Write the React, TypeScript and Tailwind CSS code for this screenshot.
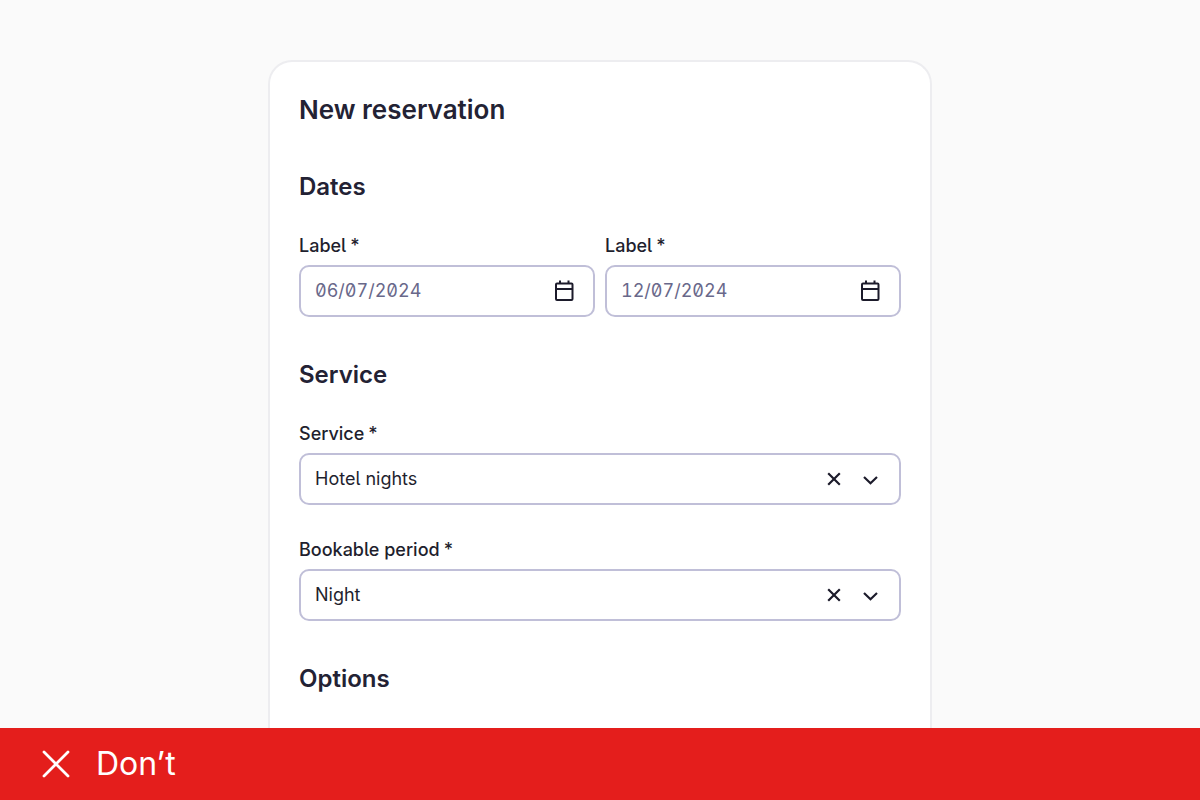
import { useId, useState } from "react";

function Label({ htmlFor, children }: { htmlFor: string; children: string }) {
  return (
    <label
      htmlFor={htmlFor}
      className="flex gap-1 text-lg leading-6 font-medium text-[#1f1f2e]"
    >
      {children}
      <span aria-hidden="true">*</span>
    </label>
  );
}

function DateField({ label, initial }: { label: string; initial: string }) {
  const id = useId();
  const [value, setValue] = useState(initial);

  return (
    <div className="min-w-0 flex-1">
      <Label htmlFor={id}>{label}</Label>
      <div className="mt-[7px] flex h-[52px] items-center rounded-[10px] border-2 border-[#c0bfd8] bg-white pr-4 pl-3.5">
        <input
          id={id}
          value={value}
          required
          onChange={(e) => setValue(e.target.value)}
          className="min-w-0 flex-1 bg-transparent text-lg text-[#69688a] outline-none [font-feature-settings:'tnum','zero']"
        />
        <button type="button" aria-label="Open calendar" className="cursor-pointer">
          <svg className="h-6 w-6" viewBox="0 0 24 24" fill="none" stroke="#1c1b2b" strokeWidth="2">
            <rect x="3" y="4.5" width="16.5" height="16.5" rx="1" />
            <path d="M3 10h16.5M7 1.5v3M15.5 1.5v3" />
          </svg>
        </button>
      </div>
    </div>
  );
}

function SelectField({ label, options }: { label: string; options: string[] }) {
  const id = useId();
  const [value, setValue] = useState(options[0]);

  return (
    <div>
      <Label htmlFor={id}>{label}</Label>
      <div className="relative mt-[7px]">
        <select
          id={id}
          value={value}
          required
          onChange={(e) => setValue(e.target.value)}
          className="h-[52px] w-full appearance-none rounded-[10px] border-2 border-[#c0bfd8] bg-white pr-24 pl-3.5 text-lg text-[#1f1f2e] outline-none"
        >
          <option value="" />
          {options.map((option) => (
            <option key={option}>{option}</option>
          ))}
        </select>
        <div className="pointer-events-none absolute inset-y-0 right-5 flex items-center gap-4">
          <button
            type="button"
            aria-label="Clear"
            onClick={() => setValue("")}
            className="pointer-events-auto cursor-pointer"
          >
            <svg className="h-5 w-5" viewBox="0 0 20 20" fill="none" stroke="#1c1b2b" strokeWidth="2.2">
              <path d="M3.2 4.2l11.6 11.6M14.8 4.2L3.2 15.8" />
            </svg>
          </button>
          <svg className="h-5 w-5" viewBox="0 0 20 20" fill="none" stroke="#1c1b2b" strokeWidth="2.2">
            <path d="M3 8l6.5 6.2L16 8" />
          </svg>
        </div>
      </div>
    </div>
  );
}

export default function App() {
  return (
    <div className="flex h-screen flex-col bg-[#fafafa] font-[Inter,sans-serif] [font-feature-settings:'cv05']">
      <main className="min-h-0 flex-1 overflow-hidden px-4 pt-15">
        <form className="mx-auto min-h-full max-w-[664px] rounded-t-3xl border-2 border-b-0 border-[#ededf0] bg-white px-[29px] pt-8 text-[#232234]">
          <h1 className="text-[26px] leading-8 font-semibold">New reservation</h1>

          <section className="pt-[45px]">
            <h2 className="text-2xl leading-8 font-semibold">Dates</h2>
            <div className="mt-[31px] flex gap-2.5">
              <DateField label="Label" initial="06/07/2024" />
              <DateField label="Label" initial="12/07/2024" />
            </div>
          </section>

          <section className="pt-[42px]">
            <h2 className="text-2xl leading-8 font-semibold">Service</h2>
            <div className="mt-[31px] flex flex-col gap-[33px]">
              <SelectField label="Service" options={["Hotel nights"]} />
              <SelectField label="Bookable period" options={["Night"]} />
            </div>
          </section>

          <section className="pt-[42px]">
            <h2 className="text-2xl leading-8 font-semibold">Options</h2>
          </section>
        </form>
      </main>

      <footer className="flex h-18 shrink-0 items-center gap-6 bg-[#e41e1c] pl-10 text-white">
        <svg className="h-8 w-8" viewBox="0 0 32 32" fill="none" stroke="currentColor" strokeWidth="2.8" strokeLinecap="round">
          <path d="M4 4l24 24M28 4L4 28" />
        </svg>
        <p className="text-[32px] leading-10">Don’t</p>
      </footer>
    </div>
  );
}
